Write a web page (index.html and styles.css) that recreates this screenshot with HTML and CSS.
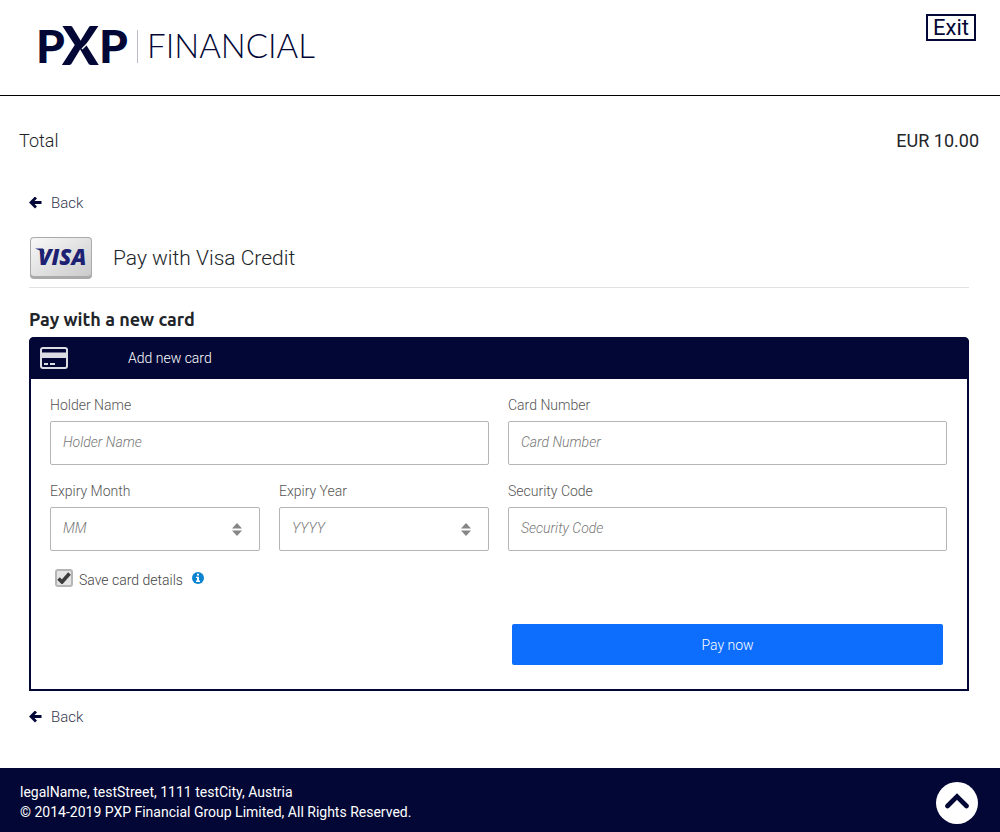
FILE: index.html
```html
<!DOCTYPE html>
<html lang="en">
<head>
<meta charset="utf-8">
<meta name="viewport" content="width=device-width, initial-scale=1">
<title>PXP Financial</title>
<link rel="stylesheet" href="styles.css">
</head>
<body>
<header class="site-header">
  <svg class="logo" width="320" height="80" viewBox="0 0 320 80" role="img" aria-label="PXP Financial">
    <text class="logo-bold" x="-3" y="63">P</text>
    <text class="logo-bold logo-x" x="23" y="65">X</text>
    <text class="logo-bold" x="60" y="63">P</text>
    <path d="M43 49L53 39" stroke="#fff" stroke-width="1.500"/>
    <path d="M98.500 30v33" stroke="#b9bbca" stroke-width="1"/>
    <text class="logo-light" x="108" y="58">FINANCIAL</text>
  </svg>
  <button class="exit" type="button">Exit</button>
</header>

<main class="page">
  <div class="total"><span>Total</span><span class="amount">EUR 10.00</span></div>

  <div class="content">
    <a class="back" href="#">
      <svg width="13" height="13" viewBox="0 0 13 13" aria-hidden="true"><path d="M7 0.500L2 5.500L7 10.500M2 5.500H12.500" fill="none" stroke="#020736" stroke-width="2.800"/></svg>
      Back
    </a>

    <div class="method">
      <svg width="62" height="42" viewBox="0 0 62 42" role="img" aria-label="Visa">
        <defs><linearGradient id="card" x1="0" y1="0" x2="1" y2="1"><stop offset="0" stop-color="#f8f8f8"/><stop offset="1" stop-color="#cbcbcb"/></linearGradient></defs>
        <rect width="62" height="42" rx="4" fill="#aaa"/>
        <rect x="1" y="1" width="60" height="38" rx="3" fill="url(#card)"/>
        <text class="visa" x="8" y="28">VISA</text>
        <path d="M5 11.500H13L15 17Q10 12.500 5 11.500Z" fill="#1c2173"/>
      </svg>
      <h1 class="method-name">Pay with Visa Credit</h1>
    </div>

    <h2 class="section-title">Pay with a new card</h2>

    <section class="panel">
      <div class="panel-head">
        <svg width="28" height="22" viewBox="0 0 28 22" aria-hidden="true"><rect x="1" y="1" width="26" height="20" rx="2" fill="none" stroke="#dcdde3" stroke-width="2"/><path d="M1 5.500H27V11H1Z" fill="#dcdde3"/><path d="M4 17H8M10 17H15" stroke="#dcdde3" stroke-width="2"/></svg>
        <span>Add new card</span>
      </div>
      <form class="form">
        <div class="field wide">
          <label for="holder">Holder Name</label>
          <input class="control" id="holder" type="text" placeholder="Holder Name">
        </div>
        <div class="field wide">
          <label for="number">Card Number</label>
          <input class="control" id="number" type="text" placeholder="Card Number">
        </div>
        <div class="field">
          <label for="month">Expiry Month</label>
          <div class="select-wrap">
            <select class="control" id="month"><option>MM</option></select>
            <svg class="sorter" width="10" height="13" viewBox="0 0 10 13" aria-hidden="true"><path d="M0 5.500L5 0L10 5.500ZM0 7.500L5 13L10 7.500Z" fill="#868686"/></svg>
          </div>
        </div>
        <div class="field">
          <label for="year">Expiry Year</label>
          <div class="select-wrap">
            <select class="control" id="year"><option>YYYY</option></select>
            <svg class="sorter" width="10" height="13" viewBox="0 0 10 13" aria-hidden="true"><path d="M0 5.500L5 0L10 5.500ZM0 7.500L5 13L10 7.500Z" fill="#868686"/></svg>
          </div>
        </div>
        <div class="field wide">
          <label for="code">Security Code</label>
          <input class="control" id="code" type="text" placeholder="Security Code">
        </div>
        <div class="save">
          <span class="check-wrap">
            <input class="check" id="save" type="checkbox" checked>
            <svg class="tick" width="14" height="12" viewBox="0 0 14 12" aria-hidden="true"><path d="M1.500 6.500L5 10L12.500 1.500" fill="none" stroke="#3c3c3c" stroke-width="3.600"/></svg>
          </span>
          <label for="save">Save card details</label>
          <svg width="12" height="12" viewBox="0 0 12 12" aria-hidden="true"><circle cx="6" cy="6" r="6" fill="#0b84cf"/><path d="M5 1.800H7V3.500H5ZM4 4.700H7V8.500H8V10H4V8.500H5V6H4Z" fill="#fff"/></svg>
        </div>
        <button class="pay" type="submit">Pay now</button>
      </form>
    </section>

    <a class="back" href="#">
      <svg width="13" height="13" viewBox="0 0 13 13" aria-hidden="true"><path d="M7 0.500L2 5.500L7 10.500M2 5.500H12.500" fill="none" stroke="#020736" stroke-width="2.800"/></svg>
      Back
    </a>
  </div>
</main>

<footer class="site-footer">
  <p class="legal">legalName, testStreet, 1111 testCity, Austria<br>© 2014-2019 PXP Financial Group Limited, All Rights Reserved.</p>
  <button class="to-top" type="button" aria-label="Back to top">
    <svg width="24" height="16" viewBox="0 0 24 16" aria-hidden="true"><path d="M2.500 13L12 3.500L21.500 13" fill="none" stroke="#020736" stroke-width="4.600" stroke-linecap="round"/></svg>
  </button>
</footer>
</body>
</html>
```
FILE: styles.css
```css
* {
  box-sizing: border-box;
}

body {
  margin: 0;
  min-height: 100vh;
  display: flex;
  flex-direction: column;
  font-family: Roboto, "Liberation Sans", sans-serif;
  font-size: 14px;
  font-weight: 300;
  color: #212529;
  background: #fff;
}

h1, h2, p {
  margin: 0;
}

button, input, select {
  font: inherit;
}

.site-header {
  display: flex;
  justify-content: space-between;
  align-items: flex-start;
  border-bottom: 1px solid #000;
  padding: 0 24px 15px 39px;
}

.logo {
  overflow: visible;
}

.logo text {
  font-family: Lato, sans-serif;
  fill: #020736;
}

.logo .logo-bold {
  font-size: 46px;
  font-weight: 900;
}

.logo .logo-x {
  font-size: 54px;
}

.logo .logo-light {
  font-size: 33px;
  font-weight: 300;
}

.exit {
  height: 27px;
  margin-top: 14px;
  padding: 0 5px;
  border: 2px solid #020736;
  background: #fff;
  color: #020736;
  font-size: 22px;
  font-weight: 400;
  line-height: 22px;
}

.page {
  flex: 1;
}

.total {
  display: flex;
  justify-content: space-between;
  padding: 33px 21px 0 19px;
  font-size: 18px;
  line-height: 24px;
}

.amount {
  font-weight: 400;
}

.content {
  padding: 39px 31px 0 29px;
}

.back {
  display: flex;
  align-items: center;
  gap: 9px;
  width: max-content;
  font-size: 15px;
  line-height: 22px;
  color: #343750;
  text-decoration: none;
}

.method {
  display: flex;
  align-items: center;
  gap: 21px;
  margin-top: 23px;
  padding: 0 0 8px 1px;
  border-bottom: 1px solid #e1e1e1;
}

.method-name {
  font-size: 21px;
  font-weight: 300;
  line-height: 24px;
}

.visa {
  font-family: "Open Sans", sans-serif;
  font-size: 22px;
  font-style: italic;
  font-weight: 800;
  fill: #1c2173;
}

.section-title {
  margin: 19px 0 6px;
  font-family: Ubuntu, "Noto Sans", sans-serif;
  font-size: 18px;
  font-weight: 700;
  line-height: 24px;
}

.panel {
  border: 2px solid #020736;
  border-top: 0;
  border-radius: 5px 5px 0 0;
}

.panel-head {
  display: flex;
  align-items: center;
  gap: 60px;
  height: 42px;
  margin: 0 -2px;
  padding: 0 11px;
  border-radius: 5px 5px 0 0;
  background: #020736;
  color: #fff;
}

.form {
  display: grid;
  grid-template-columns: repeat(4, 1fr);
  column-gap: 19px;
  row-gap: 16px;
  padding: 16px 20px 24px 19px;
}

.field {
  display: flex;
  flex-direction: column;
  gap: 6px;
  color: #555;
  line-height: 20px;
}

.wide {
  grid-column: span 2;
}

.control {
  width: 100%;
  height: 44px;
  padding: 0 12px 2px;
  border: 1px solid #b5b5b5;
  border-radius: 2px;
  background: #fff;
  color: #777;
  font-style: italic;
  appearance: none;
}

.control::placeholder {
  color: #777;
}

.select-wrap {
  position: relative;
}

.sorter {
  position: absolute;
  top: 16px;
  right: 18px;
  pointer-events: none;
}

.save {
  grid-column: 1 / -1;
  display: flex;
  align-items: center;
  gap: 6px;
  height: 22px;
  padding-left: 5px;
  color: #444;
}

.save label {
  margin-right: 3px;
  padding-top: 3px;
}

.check-wrap {
  position: relative;
  display: flex;
}

.check {
  width: 18px;
  height: 18px;
  margin: 0;
  border: 2px solid #b5b5b5;
  border-radius: 3px;
  background: #e4e4e4;
  appearance: none;
}

.tick {
  position: absolute;
  top: 3px;
  left: 2px;
  pointer-events: none;
}

.pay {
  grid-column: 3 / -1;
  height: 41px;
  margin: 19px 4px 0;
  border: 0;
  border-radius: 2px;
  background: #0d6efd;
  color: #fff;
}

.panel + .back {
  margin-top: 15px;
}

.site-footer {
  display: flex;
  justify-content: space-between;
  align-items: flex-start;
  padding: 14px 22px 8px 20px;
  background: #020736;
  color: #fff;
}

.legal {
  font-weight: 400;
  line-height: 20px;
}

.to-top {
  display: flex;
  align-items: center;
  justify-content: center;
  width: 42px;
  height: 42px;
  padding: 0 0 5px;
  border: 0;
  border-radius: 50%;
  background: #fff;
}
```
